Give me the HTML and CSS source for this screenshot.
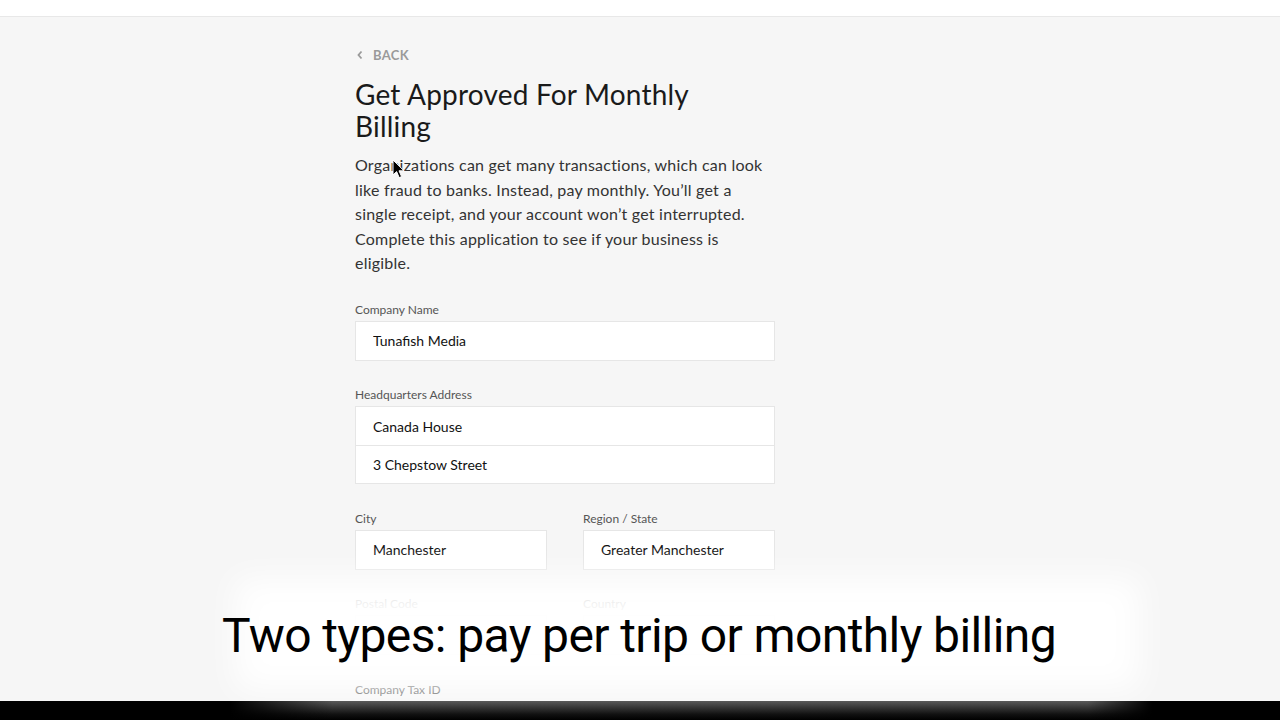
FILE: index.html
```html
<!DOCTYPE html>
<html lang='en'>

<head>
    <meta charset='UTF-8'>
    <meta name='viewport' content='width=device-width, initial-scale=1.0'>
    <title>Get Approved For Monthly Billing</title>
    <link rel="stylesheet" href="styles.css">
</head>

<body>
    <div class='topbar'></div>

    <div class='page'>
        <div class='container'>
            <a class='back' href='#'>
                <svg width='8' height='10' viewBox='0 0 8 10'>
                    <path d='M5.5 1.5 L2.5 5 L5.5 8.5' fill='none' stroke='#9a9a9a' stroke-width='1.8' />
                </svg>
                BACK
            </a>

            <h1>Get Approved For Monthly Billing</h1>

            <p class='intro'>Organizations can get many transactions, which can look like fraud to banks. Instead, pay
                monthly. You’ll get a single receipt, and your account won’t get interrupted. Complete this application
                to see if your business is eligible.</p>

            <div class='form-group'>
                <label for='company_name'>Company Name</label>
                <input type='text' id='company_name' value='Tunafish Media'>
            </div>

            <div class='form-group'>
                <label for='address_1'>Headquarters Address</label>
                <div class='stacked'>
                    <input type='text' id='address_1' value='Canada House'>
                    <input type='text' id='address_2' value='3 Chepstow Street'>
                </div>
            </div>

            <div class='form-row'>
                <div class='form-group'>
                    <label for='city'>City</label>
                    <input type='text' id='city' value='Manchester'>
                </div>
                <div class='form-group'>
                    <label for='region'>Region / State</label>
                    <input type='text' id='region' value='Greater Manchester'>
                </div>
            </div>

            <div class='form-row'>
                <div class='form-group'>
                    <label for='postal'>Postal Code</label>
                    <input type='text' id='postal'>
                </div>
                <div class='form-group'>
                    <label for='country'>Country</label>
                    <input type='text' id='country'>
                </div>
            </div>

            <div class='form-group'>
                <label for='tax_id'>Company Tax ID</label>
                <input type='text' id='tax_id'>
            </div>
        </div>
    </div>

    <!-- mouse pointer from the recording -->
    <svg class='cursor' width='14' height='20' viewBox='0 0 14 20'>
        <path d='M1 1 L1 16 L4.6 12.6 L7.2 18.6 L9.6 17.6 L7 11.8 L12 11.8 Z' fill='#000' stroke='#fff'
            stroke-width='1' />
    </svg>

    <div class='caption-glow'></div>
    <div class='caption'>Two types: pay per trip or monthly billing</div>
    <div class='player-bar'></div>
</body>

</html>
```

FILE: styles.css
```css
body {
    font-family: Lato, "Open Sans", sans-serif;
    margin: 0;
    padding: 0;
    background-color: #f6f6f6;
    height: 720px;
    overflow: hidden;
}

.topbar {
    height: 16px;
    background-color: #fff;
    border-bottom: 1px solid #e8e8e8;
}

.page {
    display: flex;
    padding-left: 355px;
    padding-top: 30px;
}

.container {
    width: 420px;
}

.back {
    display: flex;
    align-items: center;
    gap: 9px;
    height: 16px;
    padding-left: 1px;
    color: #9a9a9a;
    font-size: 13px;
    font-weight: bold;
    letter-spacing: 0.3px;
    text-decoration: none;
}

h1 {
    margin: 15px 0 0 0;
    font-size: 28px;
    line-height: 32px;
    font-weight: normal;
    color: #1a1a1a;
    letter-spacing: 0.2px;
    padding-right: 60px;
}

.intro {
    margin: 11px 0 26px 0;
    font-size: 16px;
    line-height: 24.5px;
    letter-spacing: 0.22px;
    color: #333;
}

.form-group {
    margin-bottom: 26.5px;
}

.form-group label {
    display: block;
    height: 16px;
    line-height: 16px;
    margin-bottom: 3px;
    font-size: 12px;
    color: #555;
}

.form-group input {
    display: block;
    box-sizing: border-box;
    width: 100%;
    height: 40px;
    padding: 0 17px;
    border: 1px solid #e6e6e6;
    background-color: #fff;
    font-family: Lato, sans-serif;
    font-size: 14px;
    color: #111;
    outline: none;
}

.stacked input + input {
    border-top: none;
    height: 38px;
}

.form-row {
    display: grid;
    grid-template-columns: 192px 192px;
    column-gap: 36px;
}

.cursor {
    position: absolute;
    left: 392px;
    top: 159px;
}

.caption-glow {
    position: absolute;
    left: 235px;
    top: 578px;
    width: 905px;
    height: 112px;
    background-color: rgba(255, 255, 255, 0.96);
    filter: blur(16px);
}

.caption {
    position: absolute;
    left: 0;
    right: 0;
    top: 606px;
    text-align: center;
    padding-right: 2px;
    font-family: Roboto, sans-serif;
    font-size: 48px;
    line-height: 60px;
    color: #000;
    letter-spacing: -0.6px;
}

.player-bar {
    position: absolute;
    left: 0;
    right: 0;
    bottom: 0;
    height: 19px;
    background:
        linear-gradient(to right, #000 18%, rgba(0, 0, 0, 0) 26%, rgba(0, 0, 0, 0) 85%, #000 90%),
        linear-gradient(to bottom, #5a5a5a, #111 70%, #000);
}
```
